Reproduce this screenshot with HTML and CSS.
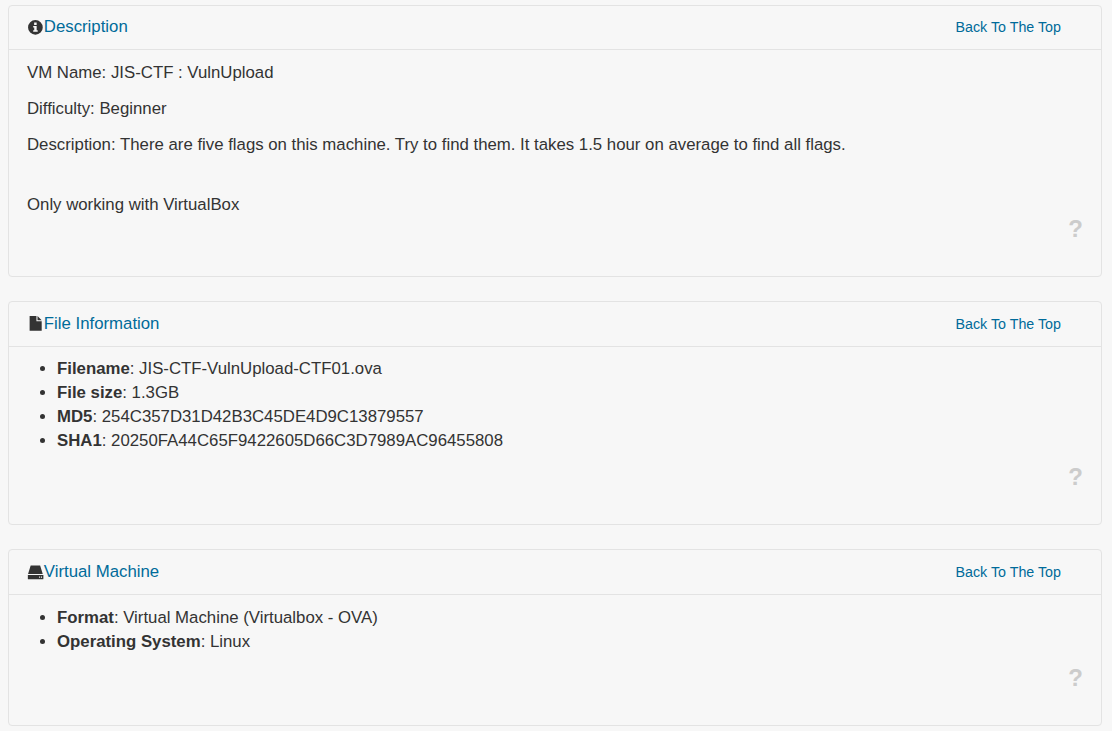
FILE: index.html
```html
<!DOCTYPE html>
<html lang="en">

<head>
  <meta charset="UTF-8">
  <title>JIS-CTF: VulnUpload</title>
  <link rel="stylesheet" href="styles.css">
</head>

<body>
  <section class="panel">
    <div class="panel-heading">
      <h3 class="panel-title">
        <svg class="panel-icon" viewBox="0 0 16 16" aria-hidden="true">
          <path fill-rule="evenodd" d="M8 1a7 7 0 1 1 0 14A7 7 0 0 1 8 1zM6.800 3.400h2.400v2.200H6.800zM5.900 6.700h3.300v4.100h1v1.400H5.900v-1.400h1V8.100h-1z" />
        </svg>
        <a href="#">Description</a>
      </h3>
      <a class="back-top" href="#">Back To The Top</a>
    </div>
    <div class="panel-body">
      <p>VM Name: JIS-CTF : VulnUpload</p>
      <p>Difficulty: Beginner</p>
      <p>Description: There are five flags on this machine. Try to find them. It takes 1.5 hour on average to find all flags.</p>
      <p class="last-note"><br>Only working with VirtualBox</p>
      <div class="help-mark">?</div>
    </div>
  </section>

  <section class="panel">
    <div class="panel-heading">
      <h3 class="panel-title">
        <svg class="panel-icon" viewBox="0 0 16 16" aria-hidden="true">
          <path d="M2.500 1h6.500v5h5v9H2.500zM10 1l4 4h-4z" />
        </svg>
        <a href="#">File Information</a>
      </h3>
      <a class="back-top" href="#">Back To The Top</a>
    </div>
    <div class="panel-body">
      <ul>
        <li><b>Filename</b>: JIS-CTF-VulnUpload-CTF01.ova</li>
        <li><b>File size</b>: 1.3GB</li>
        <li><b>MD5</b>: 254C357D31D42B3C45DE4D9C13879557</li>
        <li><b>SHA1</b>: 20250FA44C65F9422605D66C3D7989AC96455808</li>
      </ul>
      <div class="help-mark">?</div>
    </div>
  </section>

  <section class="panel">
    <div class="panel-heading">
      <h3 class="panel-title">
        <svg class="panel-icon" viewBox="0 0 16 16" aria-hidden="true">
          <path fill-rule="evenodd" d="M3.500 1.500h9L15 9.500H1zM.8 10.500h14.800v3.500a.5.5 0 0 1-.5.5H1.300a.5.5 0 0 1-.5-.5zM11.500 12v1h1v-1zM13.300 12v1h1v-1z" />
        </svg>
        <a href="#">Virtual Machine</a>
      </h3>
      <a class="back-top" href="#">Back To The Top</a>
    </div>
    <div class="panel-body">
      <ul>
        <li><b>Format</b>: Virtual Machine (Virtualbox - OVA)</li>
        <li><b>Operating System</b>: Linux</li>
      </ul>
      <div class="help-mark">?</div>
    </div>
  </section>
</body>

</html>
```

FILE: styles.css
```css
body {
  margin: 0;
  padding: 5px 10px 0 8px;
  background: #f7f7f7;
  color: #333;
  font-family: "Liberation Sans", Arial, sans-serif;
  font-size: 16.8px;
  line-height: 24px;
}

a {
  color: #006b9a;
  text-decoration: none;
}

.panel {
  background: #f7f7f7;
  border: 1px solid #e3e3e3;
  border-radius: 4px;
  margin-bottom: 24px;
}

.panel-heading {
  display: flex;
  justify-content: space-between;
  align-items: center;
  height: 42.9px;
  padding: 0 40px 0.5px 18px;
  border-bottom: 1px solid #e3e3e3;
}

.panel-title {
  display: flex;
  align-items: center;
  margin: 0;
  font-size: 16.8px;
  font-weight: 400;
}

.panel-icon {
  width: 16.8px;
  height: 16.8px;
  fill: #333;
}

.back-top {
  font-size: 14.28px;
}

.panel-body {
  padding: 10.75px 18px 35.1px;
}

.panel-body p {
  margin: 0 0 12px;
}

.panel-body .last-note {
  margin-bottom: 0;
}

.panel-body ul {
  margin: 0 0 12px;
  padding-left: 30px;
}

.help-mark {
  color: #ccc;
  font-size: 24px;
  font-weight: 700;
  text-align: right;
  line-height: 24px;
}
```
